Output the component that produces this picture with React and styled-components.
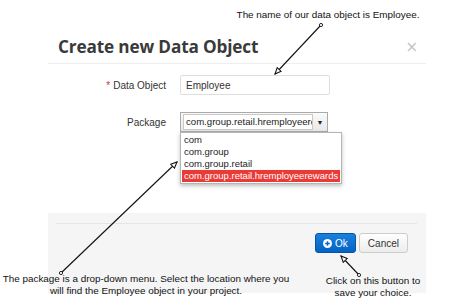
import React from 'react';
import styled, { createGlobalStyle } from 'styled-components';

const Global = createGlobalStyle`
  body { margin: 0; background: #fff; }
`;

const Figure = styled.div`
  position: relative;
  width: 474px;
  height: 301px;
  overflow: hidden;
  font-family: "Liberation Sans", Arial, sans-serif;
  color: #333;
`;

const Dialog = styled.div`
  margin-left: 48px;
  padding-top: 30px;
  width: 378px;
`;

const Header = styled.div`
  height: 33px;
  display: flex;
  align-items: center;
  justify-content: space-between;
  padding: 0 8px 0 10px;
  border-bottom: 1px solid #eee;
`;

const Title = styled.h1`
  margin: 0;
  font-family: "Open Sans", sans-serif;
  font-weight: 700;
  font-size: 17.2px;
  color: #3a3a3a;
  letter-spacing: -0.15px;
`;

const Close = styled.span`
  font-size: 15px;
  color: #c4c4c4;
  font-family: "DejaVu Sans", sans-serif;
`;

const Body = styled.div`
  height: 138px;
  padding-top: 11px;
  display: flex;
  flex-direction: column;
  gap: 17px;
`;

const Row = styled.div`
  display: grid;
  grid-template-columns: 118px 1fr;
  column-gap: 14px;
  align-items: center;
  font-size: 10px;
`;

const Label = styled.label`
  text-align: right;
  color: #333;
`;

const Required = styled.span`
  color: #d2322d;
  margin-right: 3px;
`;

const Input = styled.div`
  width: 143px;
  height: 18px;
  border: 1px solid #ddd;
  border-radius: 2px;
  padding-left: 5px;
  display: flex;
  align-items: center;
  font-size: 10px;
  color: #333;
`;

const SelectWrap = styled.div`
  position: relative;
  width: 148px;
`;

const Select = styled.div`
  height: 18px;
  border: 1px solid #aaa;
  background: linear-gradient(#fafafa, #e8e8e8);
  display: flex;
  align-items: center;
  padding: 0 0 0 2px;
`;

const SelectText = styled.div`
  width: 126px;
  height: 14px;
  background: #fff;
  border: 1px solid #c8c8c8;
  padding-left: 2px;
  overflow: hidden;
  white-space: nowrap;
  line-height: 14px;
  font-size: 9.6px;
  color: #222;
`;

const Caret = styled.span`
  flex: 1;
  text-align: center;
  font-size: 7px;
  color: #222;
`;

const Menu = styled.ul`
  position: absolute;
  left: 0;
  top: 20px;
  margin: 0;
  padding: 1px;
  list-style: none;
  background: #fff;
  border: 1px solid #b5b5b5;
  box-shadow: 0 2px 4px rgba(0, 0, 0, 0.25);
  font-size: 9.5px;
  white-space: nowrap;
`;

const Option = styled.li`
  height: 12px;
  line-height: 12px;
  padding: 0 2px;
  color: ${p => (p.$active ? '#fff' : '#222')};
  background: ${p => (p.$active ? '#e93a36' : 'transparent')};
`;

const Footer = styled.div`
  height: 80px;
  background: #f5f5f5;
  padding: 10px 18px 0 8px;
  box-sizing: border-box;
`;

const FooterRule = styled.div`
  border-top: 1px solid #e6e6e6;
  margin-right: -9px;
`;

const Buttons = styled.div`
  display: flex;
  justify-content: flex-end;
  gap: 3px;
  margin-top: 9px;
`;

const Button = styled.button`
  height: 20px;
  padding: 0 ${p => (p.$primary ? 7 : 8)}px;
  display: flex;
  align-items: center;
  gap: 3px;
  border-radius: 3px;
  font-family: "Liberation Sans", Arial, sans-serif;
  font-size: 10px;
  cursor: pointer;
  color: ${p => (p.$primary ? '#fff' : '#333')};
  border: 1px solid ${p => (p.$primary ? '#0654a8' : '#ccc')};
  background: ${p =>
    p.$primary ? 'linear-gradient(#1b80dc, #0463c4)' : 'linear-gradient(#fff, #ececec)'};
`;

const Note = styled.div`
  position: absolute;
  left: ${p => p.$x}px;
  top: ${p => p.$y}px;
  width: ${p => p.$w}px;
  text-align: center;
  font-size: 9.9px;
  line-height: 12px;
  color: #111;
  font-family: "Liberation Sans", Arial, sans-serif;
`;

const Overlay = styled.svg`
  position: absolute;
  left: 0;
  top: 0;
  pointer-events: none;
`;

const Arrow = ({ x1, y1, x2, y2 }) => (
  <g>
    <line x1={x1} y1={y1} x2={x2} y2={y2} stroke="#111" strokeWidth="1.1" markerEnd="url(#head)" />
    <circle cx={x1} cy={y1} r="1.6" fill="#fff" stroke="#111" strokeWidth="0.9" />
  </g>
);

const PlusCircle = () => (
  <svg width="9" height="9" viewBox="0 0 10 10">
    <circle cx="5" cy="5" r="5" fill="#fff" />
    <path d="M5 2.4v5.2M2.4 5h5.2" stroke="#0a66c8" strokeWidth="1.6" />
  </svg>
);

export default function App() {
  return (
    <Figure>
      <Global />
      <Dialog>
        <Header>
          <Title>Create new Data Object</Title>
          <Close>×</Close>
        </Header>
        <Body>
          <Row>
            <Label><Required>*</Required>Data Object</Label>
            <Input>Employee</Input>
          </Row>
          <Row>
            <Label>Package</Label>
            <SelectWrap>
              <Select>
                <SelectText>com.group.retail.hremployeerewards</SelectText>
                <Caret>▼</Caret>
              </Select>
              <Menu>
                <Option>com</Option>
                <Option>com.group</Option>
                <Option>com.group.retail</Option>
                <Option $active>com.group.retail.hremployeerewards</Option>
              </Menu>
            </SelectWrap>
          </Row>
        </Body>
        <Footer>
          <FooterRule />
          <Buttons>
            <Button $primary><PlusCircle />Ok</Button>
            <Button>Cancel</Button>
          </Buttons>
        </Footer>
      </Dialog>

      <Note $x={228} $y={9} $w={200}>The name of our data object is Employee.</Note>
      <Note $x={-2} $y={273} $w={296}>
        The package is a drop-down menu. Select the location where you<br />
        will find the Employee object in your project.
      </Note>
      <Note $x={316} $y={275} $w={114}>
        Click on this button to<br />save your choice.
      </Note>

      <Overlay width="474" height="301">
        <defs>
          <marker id="head" viewBox="0 0 10 10" refX="9" refY="5" markerWidth="7" markerHeight="7" orient="auto">
            <path d="M1 1.5L9 5L1 8.5Z" fill="#fff" stroke="#111" strokeWidth="1.4" />
          </marker>
        </defs>
        <Arrow x1={321} y1={25} x2={275} y2={74} />
        <Arrow x1={61} y1={273} x2={177} y2={162} />
        <Arrow x1={359} y1={275} x2={341} y2={256} />
      </Overlay>
    </Figure>
  );
}
